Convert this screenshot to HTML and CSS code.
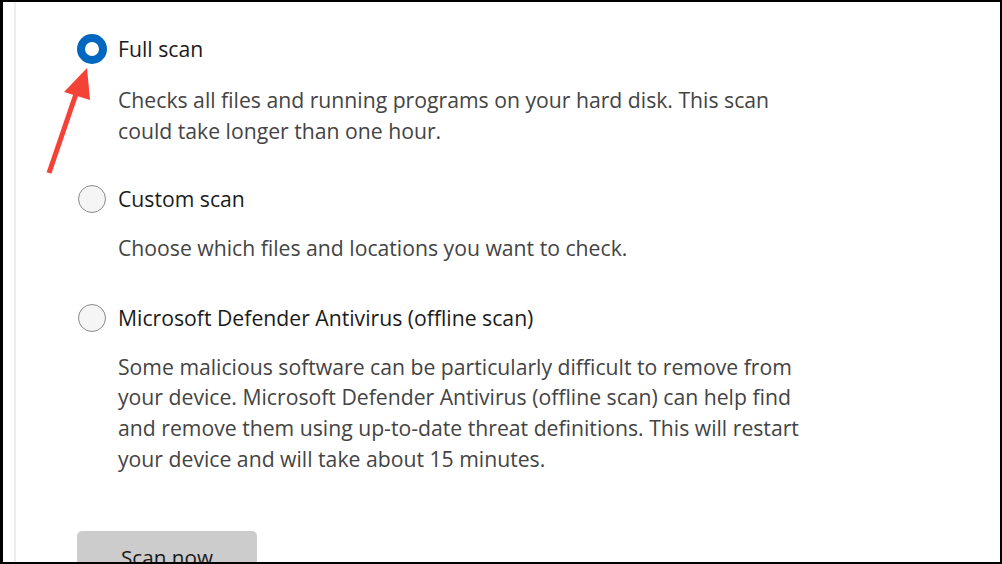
FILE: index.html
```html
<!DOCTYPE html>
<html>
<head>
<meta charset="utf-8">
<link rel="stylesheet" href="styles.css">
</head>
<body>
<div class="frame">
  <div class="panel">
    <div class="option">
      <div class="row">
        <span class="radio checked"></span>
        <span class="title">Full scan</span>
      </div>
      <p class="desc">Checks all files and running programs on your hard disk. This scan<br>could take longer than one hour.</p>
    </div>
    <div class="option">
      <div class="row">
        <span class="radio"></span>
        <span class="title">Custom scan</span>
      </div>
      <p class="desc">Choose which files and locations you want to check.</p>
    </div>
    <div class="option">
      <div class="row">
        <span class="radio"></span>
        <span class="title">Microsoft Defender Antivirus (offline scan)</span>
      </div>
      <p class="desc">Some malicious software can be particularly difficult to remove from<br>your device. Microsoft Defender Antivirus (offline scan) can help find<br>and remove them using up-to-date threat definitions. This will restart<br>your device and will take about 15 minutes.</p>
    </div>
    <button class="scan-btn">Scan now</button>
  </div>
  <svg class="arrow" width="120" height="200" viewBox="0 0 120 200">
    <line x1="49" y1="173" x2="76" y2="94" stroke="#f44336" stroke-width="5" stroke-linecap="butt"/>
    <polygon points="87,68 64,92 90,100" fill="#f44336"/>
  </svg>
</div>
</body>
</html>
```

FILE: styles.css
```css
* { box-sizing: border-box; }
html, body { margin: 0; padding: 0; background: #000; }
.frame {
  position: relative;
  width: 1002px;
  height: 564px;
  border-top: 2px solid #000;
  border-left: 3px solid #000;
  border-right: 2px solid #000;
  border-bottom: 2px solid #000;
  background: #fff;
  overflow: hidden;
  font-family: "Open Sans", "Noto Sans", sans-serif;
}
.panel {
  margin-left: 11px;
  height: 100%;
  border-left: 2px solid #ededed;
  padding: 32px 0 0 61px;
  display: flex;
  flex-direction: column;
  align-items: flex-start;
}
.option { display: flex; flex-direction: column; }
.row {
  display: flex;
  align-items: center;
  gap: 11px;
  height: 30px;
}
.radio {
  width: 30px;
  height: 30px;
  border-radius: 50%;
  display: flex;
  align-items: center;
  justify-content: center;
  flex-shrink: 0;
}
.radio:not(.checked) {
  width: 28px;
  height: 28px;
  margin: 0 1px;
  border: 1px solid #8a8a8a;
  background: #f5f5f5;
}
.radio.checked {
  background: #fff;
  border: 8px solid #0067c0;
}
.title {
  font-size: 21.2px;
  color: #1b1b1b;
  line-height: 30px;
}
.desc {
  margin: 21px 0 38px 41px;
  font-size: 21.2px;
  line-height: 30.6px;
  color: #444;
}
.option:nth-child(2) .desc { margin-top: 19px; margin-bottom: 39px; }
.option:nth-child(3) .desc { margin-top: 19px; margin-bottom: 57px; }
.scan-btn {
  width: 180px;
  height: 44px;
  border: none;
  border-radius: 5px;
  background: #cccccc;
  color: #1b1b1b;
  font-family: inherit;
  font-size: 20.7px;
  padding: 0;
  padding-top: 7px;
  line-height: 30px;
  flex-shrink: 0;
}
.arrow {
  position: absolute;
  left: -3px;
  top: -2px;
}
```
